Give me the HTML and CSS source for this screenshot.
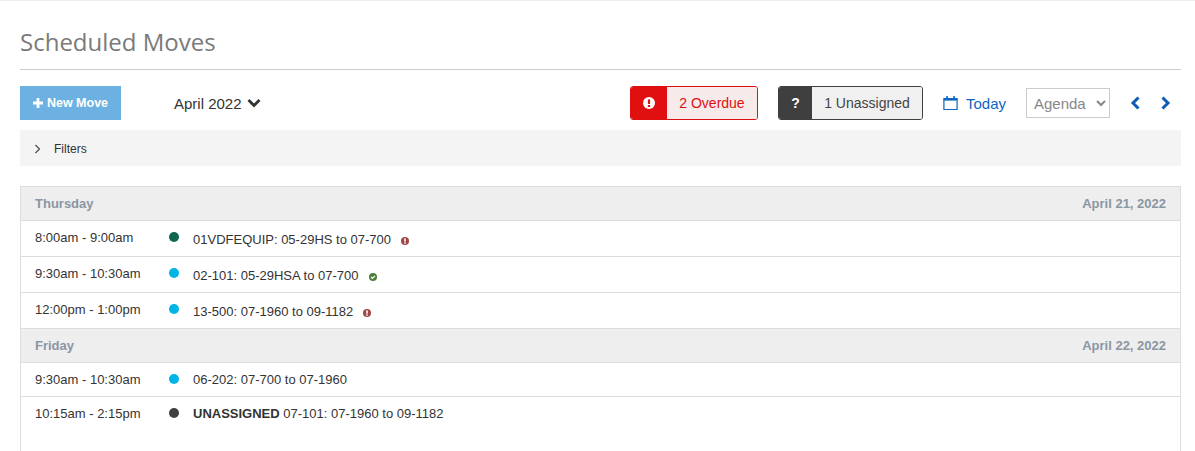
FILE: index.html
```html
<!DOCTYPE html>
<html lang="en">
<head>
    <meta charset="UTF-8">
    <title>Scheduled Moves</title>
    <link rel="stylesheet" href="styles.css">
</head>
<body>
    <div class="page">
        <h1 class="title">Scheduled Moves</h1>

        <div class="toolbar">
            <button class="new-move"><span class="plus">
                <svg width="10" height="10" viewBox="0 0 10 10"><path d="M3.6 0h2.8v3.6H10v2.8H6.4V10H3.6V6.4H0V3.6h3.6z" fill="#fff"/></svg>
            </span>New Move</button>
            <div class="month">
                April 2022
                <svg width="14" height="10" viewBox="0 0 14 10"><path d="M1.5 2 7 7.5 12.5 2" fill="none" stroke="#333" stroke-width="2.8"/></svg>
            </div>
            <div class="toolbar-right">
                <div class="alert alert-red">
                    <span class="alert-icon">
                        <svg width="12" height="12" viewBox="0 0 12 12"><circle cx="6" cy="6" r="6" fill="#fff"/><rect x="4.9" y="2.4" width="2.2" height="4.6" fill="#e01010"/><rect x="4.9" y="8" width="2.2" height="2" fill="#e01010"/></svg>
                    </span>
                    <span class="alert-text">2 Overdue</span>
                </div>
                <div class="alert alert-dark">
                    <span class="alert-icon question">?</span>
                    <span class="alert-text">1 Unassigned</span>
                </div>
                <a class="today">
                    <svg width="16" height="16" viewBox="0 0 16 16"><path d="M.9 3.5h13.2v11H.9z" fill="none" stroke="#0d66c2" stroke-width="1.2"/><path d="M.9 3h13.2v2.6H.9z" fill="#0d66c2"/><path d="M4 1v3M11 1v3" stroke="#0d66c2" stroke-width="1.6"/></svg>
                    Today
                </a>
                <select class="view-select">
                    <option>Agenda</option>
                </select>
                <div class="arrows">
                    <svg width="12" height="14" viewBox="0 0 12 14"><path d="M9.5 1.5 4 7l5.5 5.5" fill="none" stroke="#0d5cb6" stroke-width="3"/></svg>
                    <svg width="12" height="14" viewBox="0 0 12 14"><path d="M2.5 1.5 8 7l-5.5 5.5" fill="none" stroke="#0d5cb6" stroke-width="3"/></svg>
                </div>
            </div>
        </div>

        <div class="filters">
            <svg width="7" height="10" viewBox="0 0 7 10"><path d="m1.5 1 4 4-4 4" fill="none" stroke="#444" stroke-width="1.1"/></svg>
            <span>Filters</span>
        </div>

        <div class="agenda">
            <div class="day-head"><span>Thursday</span><span>April 21, 2022</span></div>
            <div class="row row-status">
                <span class="time">8:00am - 9:00am</span>
                <span class="dot dot-green"></span>
                <span class="move">01VDFEQUIP: 05-29HS to 07-700</span>
                <svg class="status" width="8" height="8" viewBox="0 0 8 8"><circle cx="4" cy="4" r="4" fill="#a04848"/><rect x="3.2" y="1.4" width="1.6" height="3.2" fill="#fff"/><rect x="3.2" y="5.3" width="1.6" height="1.4" fill="#fff"/></svg>
            </div>
            <div class="row row-status">
                <span class="time">9:30am - 10:30am</span>
                <span class="dot dot-blue"></span>
                <span class="move">02-101: 05-29HSA to 07-700</span>
                <svg class="status" width="8" height="8" viewBox="0 0 8 8"><circle cx="4" cy="4" r="4" fill="#4a7f3a"/><path d="m2 4 1.5 1.5L6 2.8" fill="none" stroke="#fff" stroke-width="1.2"/></svg>
            </div>
            <div class="row row-status">
                <span class="time">12:00pm - 1:00pm</span>
                <span class="dot dot-blue"></span>
                <span class="move">13-500: 07-1960 to 09-1182</span>
                <svg class="status" width="8" height="8" viewBox="0 0 8 8"><circle cx="4" cy="4" r="4" fill="#a04848"/><rect x="3.2" y="1.4" width="1.6" height="3.2" fill="#fff"/><rect x="3.2" y="5.3" width="1.6" height="1.4" fill="#fff"/></svg>
            </div>
            <div class="day-head"><span>Friday</span><span>April 22, 2022</span></div>
            <div class="row row-short">
                <span class="time">9:30am - 10:30am</span>
                <span class="dot dot-blue"></span>
                <span class="move">06-202: 07-700 to 07-1960</span>
            </div>
            <div class="row row-short row-last">
                <span class="time">10:15am - 2:15pm</span>
                <span class="dot dot-dark"></span>
                <span class="move"><b>UNASSIGNED</b> 07-101: 07-1960 to 09-1182</span>
            </div>
        </div>
    </div>
</body>
</html>
```

FILE: styles.css
```css
* {
    margin: 0;
    padding: 0;
    box-sizing: border-box;
}

body {
    font-family: "Liberation Sans", Arial, sans-serif;
    font-size: 13px;
    color: #333;
    background: #fff;
    overflow: hidden;
}

.page {
    height: 451px;
    padding: 0 14px 0 20px;
    border-top: 1px solid #eee;
    overflow: hidden;
}

.title {
    font-family: "Open Sans", sans-serif;
    font-size: 24px;
    font-weight: 400;
    line-height: 33px;
    color: #7a7a7a;
    padding-top: 24px;
    height: 69px;
    border-bottom: 1px solid #ccc;
}

.toolbar {
    display: flex;
    align-items: center;
    height: 34px;
    margin-top: 16px;
}

.new-move {
    width: 101px;
    height: 34px;
    background: #6db1e2;
    border: none;
    color: #fff;
    font-family: inherit;
    font-size: 12.5px;
    font-weight: 700;
    display: flex;
    align-items: center;
    justify-content: center;
}

.plus {
    display: flex;
    margin-right: 4px;
}

.month {
    margin-left: 53px;
    font-size: 15px;
    display: flex;
    align-items: center;
    gap: 5px;
}

.toolbar-right {
    margin-left: auto;
    display: flex;
    align-items: center;
}

.alert {
    display: flex;
    height: 34px;
    font-size: 14px;
    border: 1px solid;
    border-radius: 3px;
    overflow: hidden;
}

.alert-icon {
    display: flex;
    align-items: center;
    justify-content: center;
}

.alert-text {
    display: flex;
    align-items: center;
    justify-content: center;
}

.alert-red {
    width: 128px;
    border-color: #e01010;
    margin-right: 20px;
}

.alert-red .alert-icon {
    width: 36px;
    background: #e01010;
}

.alert-red .alert-text {
    flex: 1;
    background: #f6eaea;
    color: #e01010;
}

.alert-dark {
    width: 145px;
    border-color: #3f3f3f;
    margin-right: 20px;
}

.alert-dark .alert-icon {
    width: 33px;
    background: #3f3f3f;
}

.question {
    color: #fff;
    font-weight: 700;
    font-size: 14px;
}

.alert-dark .alert-text {
    flex: 1;
    background: #f0f0f0;
    color: #444;
}

.today {
    display: flex;
    align-items: center;
    gap: 7px;
    font-size: 15px;
    color: #0d66c2;
    margin-right: 20px;
}

.view-select {
    width: 84px;
    height: 30px;
    border: 1px solid #ccc;
    background: #fff;
    color: #888;
    font-family: inherit;
    font-size: 15px;
    padding-left: 3px;
}

.arrows {
    display: flex;
    gap: 19px;
    margin-left: 19px;
    margin-right: 9px;
}

.filters {
    height: 36px;
    margin-top: 10px;
    padding-left: 14px;
    padding-top: 1px;
    background: #f4f4f4;
    display: flex;
    align-items: center;
    gap: 13px;
    font-size: 12px;
}

.agenda {
    margin-top: 20px;
    border: 1px solid #ddd;
    border-top: none;
    min-height: 300px;
}

.day-head {
    display: flex;
    justify-content: space-between;
    height: 35px;
    padding: 0 14px;
    align-items: center;
    background: #eee;
    border-top: 1px solid #ddd;
    border-bottom: 1px solid #ddd;
    color: #8a96a3;
    font-weight: 700;
}

.row + .day-head {
    height: 34px;
    border-top: none;
}

.row {
    display: flex;
    align-items: flex-start;
    height: 36px;
    padding: 9px 0 0 14px;
    border-bottom: 1px solid #ddd;
}

.row-short {
    height: 34px;
}

.row-last {
    border-bottom: none;
}

.time {
    width: 134px;
}

.dot {
    width: 10px;
    height: 10px;
    border-radius: 50%;
    margin-top: 2px;
    margin-right: 14px;
}

.dot-green { background: #0f6650; }
.dot-blue { background: #00b5e6; }
.dot-dark { background: #3f3f3f; }

.row-status .move {
    margin-top: 2px;
}

.status {
    margin-left: 10px;
    margin-top: 7px;
}
```
